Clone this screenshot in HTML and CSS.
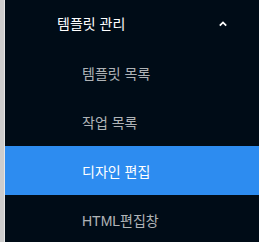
FILE: index.html
```html
<!DOCTYPE html>
<html lang="ko">
<head>
    <meta charset="UTF-8">
    <title>템플릿 관리</title>
    <link rel="stylesheet" href="styles.css">
</head>
<body>
    <div class="layout">
        <div class="side-edge"></div>
        <div class="menu">
            <div class="submenu-title">
                <span>템플릿 관리</span>
                <svg class="arrow" width="10" height="7" viewBox="0 0 10 7">
                    <polyline points="1.8,5.6 5,2.4 8.2,5.6" fill="none" stroke="#fff" stroke-width="1.8"/>
                </svg>
            </div>
            <ul class="submenu">
                <li class="menu-item">템플릿 목록</li>
                <li class="menu-item">작업 목록</li>
                <li class="menu-item active">디자인 편집</li>
                <li class="menu-item">HTML편집창</li>
            </ul>
        </div>
    </div>
</body>
</html>
```

FILE: styles.css
```css
body {
    margin: 0;
    background-color: #000c17;
    font-family: "Liberation Sans", "Noto Sans CJK KR", sans-serif;
    font-size: 14px;
}

.layout {
    display: flex;
    height: 242px;
    overflow: hidden;
}

.side-edge {
    width: 4px;
    background-color: #cdcdcd;
    border-right: 1px solid #e6e6e6;
}

.menu {
    flex: 1;
    background-color: #000c17;
}

.submenu-title {
    display: flex;
    align-items: center;
    height: 46px;
    padding-left: 52px;
    padding-right: 31px;
    color: #fff;
}

.submenu-title span {
    flex: 1;
}

.arrow {
    display: block;
}

.submenu {
    list-style-type: none;
    margin: 0;
    padding: 2px 0 0;
}

.menu-item {
    display: flex;
    align-items: center;
    height: 49px;
    padding-left: 77px;
    color: rgba(255, 255, 255, 0.7);
}

.menu-item.active {
    background-color: #2d8cf0;
    color: #fff;
}
```
